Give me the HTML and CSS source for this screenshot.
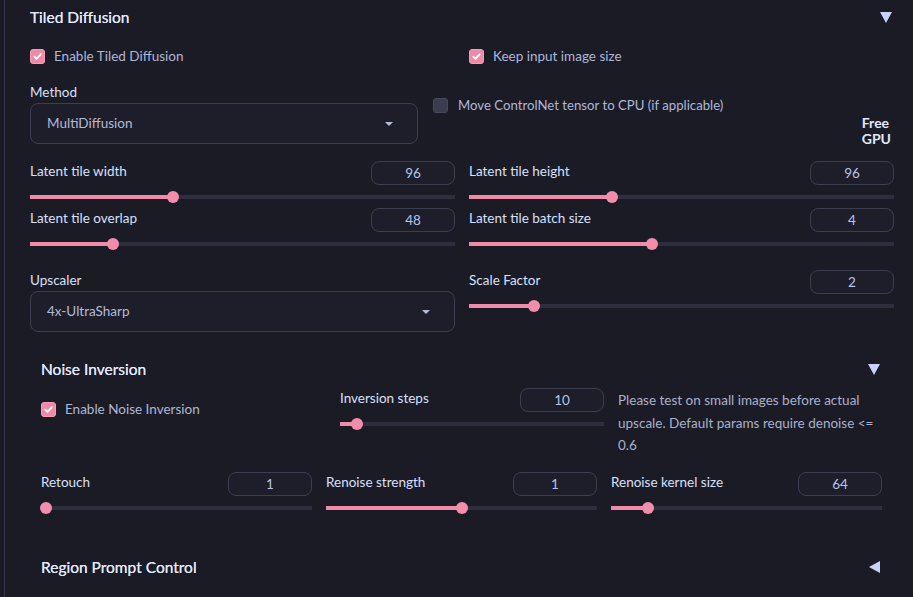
FILE: index.html
```html
<!DOCTYPE html>
<html lang="en">

<head>
  <meta charset="UTF-8">
  <meta name="viewport" content="width=device-width, initial-scale=1.0">
  <title>Tiled Diffusion</title>
  <link rel="stylesheet" href="styles.css">
</head>

<body>
  <div class="panel">
    <div class="acc_head">
      <span class="acc_title">Tiled Diffusion</span>
      <svg class="tri" width="12" height="11" viewBox="0 0 12 11"><path d="M0 0H12L6 11Z" /></svg>
    </div>

    <div class="two_col check_row">
      <label class="check"><span class="box on"><svg viewBox="0 0 14 14"><path d="M3.5 7.2l2.4 2.4 4.6-5" /></svg></span>Enable Tiled Diffusion</label>
      <label class="check"><span class="box on"><svg viewBox="0 0 14 14"><path d="M3.5 7.2l2.4 2.4 4.6-5" /></svg></span>Keep input image size</label>
    </div>

    <div class="method_row">
      <div>
        <div class="label">Method</div>
        <div class="dropdown method_dd">MultiDiffusion<span class="caret"></span></div>
      </div>
      <div class="method_right">
        <label class="check"><span class="box"></span>Move ControlNet tensor to CPU (if applicable)</label>
        <div class="free_gpu">Free<br>GPU</div>
      </div>
    </div>

    <div class="two_col slider_grid">
      <div class="slider">
        <div class="slider_head"><span class="label">Latent tile width</span><span class="num">96</span></div>
        <div class="track"><div class="fill" style="width: 33.6%"></div></div>
      </div>
      <div class="slider">
        <div class="slider_head"><span class="label">Latent tile height</span><span class="num">96</span></div>
        <div class="track"><div class="fill" style="width: 33.6%"></div></div>
      </div>
      <div class="slider">
        <div class="slider_head"><span class="label">Latent tile overlap</span><span class="num">48</span></div>
        <div class="track"><div class="fill" style="width: 19.5%"></div></div>
      </div>
      <div class="slider">
        <div class="slider_head"><span class="label">Latent tile batch size</span><span class="num">4</span></div>
        <div class="track"><div class="fill" style="width: 43.1%"></div></div>
      </div>
    </div>

    <div class="two_col upscale_row">
      <div>
        <div class="label">Upscaler</div>
        <div class="dropdown up_dd">4x-UltraSharp<span class="caret"></span></div>
      </div>
      <div class="slider">
        <div class="slider_head"><span class="label">Scale Factor</span><span class="num">2</span></div>
        <div class="track"><div class="fill" style="width: 15.3%"></div></div>
      </div>
    </div>

    <div class="sub">
      <div class="acc_head sub_head">
        <span class="acc_title">Noise Inversion</span>
        <svg class="tri" width="12" height="11" viewBox="0 0 12 11"><path d="M0 0H12L6 11Z" /></svg>
      </div>

      <div class="noise_row">
        <label class="check noise_check"><span class="box on"><svg viewBox="0 0 14 14"><path d="M3.5 7.2l2.4 2.4 4.6-5" /></svg></span>Enable Noise Inversion</label>
        <div class="slider">
          <div class="slider_head"><span class="label">Inversion steps</span><span class="num">10</span></div>
          <div class="track"><div class="fill" style="width: 6.4%"></div></div>
        </div>
        <p class="info">Please test on small images before actual upscale. Default params require denoise &lt;= 0.6</p>
      </div>

      <div class="three_col">
        <div class="slider">
          <div class="slider_head"><span class="label">Retouch</span><span class="num">1</span></div>
          <div class="track"><div class="fill" style="width: 1.8%"></div></div>
        </div>
        <div class="slider">
          <div class="slider_head"><span class="label">Renoise strength</span><span class="num">1</span></div>
          <div class="track"><div class="fill" style="width: 50.2%"></div></div>
        </div>
        <div class="slider">
          <div class="slider_head"><span class="label">Renoise kernel size</span><span class="num">64</span></div>
          <div class="track"><div class="fill" style="width: 13.7%"></div></div>
        </div>
      </div>

      <div class="acc_head sub_head region_head">
        <span class="acc_title">Region Prompt Control</span>
        <svg class="tri" width="11" height="12" viewBox="0 0 11 12"><path d="M11 0V12L0 6Z" /></svg>
      </div>
    </div>
  </div>
</body>

</html>
```

FILE: styles.css
```css
* {
  margin: 0;
  padding: 0;
  box-sizing: border-box;
}

body {
  background-color: #1b1b26;
  font-family: Lato, "Liberation Sans", sans-serif;
  font-size: 14px;
  color: #c8d1f3;
  overflow: hidden;
}

.panel {
  height: 597px;
  margin-left: 4px;
  border-left: 1px solid #34344a;
  padding: 0 19px 0 25px;
}

.acc_head {
  display: flex;
  justify-content: space-between;
  align-items: center;
  height: 34px;
}

.acc_title {
  font-size: 15.5px;
  font-weight: 400;
  color: #e2e9ff;
  text-shadow: 0 0 0.3px #e2e9ff;
}

.tri {
  fill: #c9d2fb;
  margin-right: 2px;
}

.label {
  display: block;
  line-height: 20px;
  font-size: 13.5px;
  font-weight: 400;
  color: #d8e0fd;
}

/* checkboxes */
.check {
  display: flex;
  align-items: center;
  gap: 9px;
  line-height: 20px;
  font-size: 13.5px;
  color: #aeb7d8;
}

.box {
  display: block;
  width: 15px;
  height: 15px;
  border-radius: 3px;
  background-color: #3b3c4e;
  border: 1px solid #47485c;
}

.box.on {
  background-color: #ee8aa8;
  border-color: #f3a0b8;
}

.box svg {
  display: block;
  width: 13px;
  height: 13px;
  fill: none;
  stroke: #fff;
  stroke-width: 2;
  stroke-linecap: round;
  stroke-linejoin: round;
}

.two_col {
  display: grid;
  grid-template-columns: 1fr 1fr;
  column-gap: 14px;
}

.check_row {
  margin-top: 12px;
}

/* method */
.method_row {
  display: grid;
  grid-template-columns: 388px 1fr;
  column-gap: 15px;
  margin-top: 16px;
}

.dropdown {
  position: relative;
  margin-top: 1px;
  border: 1px solid #3d3d50;
  border-radius: 8px;
  background-color: #1e1e2b;
  padding-left: 16px;
  color: #b2bad9;
  font-size: 13.5px;
}

.method_dd {
  height: 41px;
  line-height: 39px;
}

.up_dd {
  height: 41px;
  line-height: 39px;
}

.caret {
  position: absolute;
  right: 24px;
  top: 18px;
  border-left: 4px solid transparent;
  border-right: 4px solid transparent;
  border-top: 4px solid #b4bcd6;
}

.method_right {
  display: flex;
  flex-direction: column;
  padding-top: 13px;
}

.method_right .check {
  gap: 10px;
  font-size: 13.2px;
}

.free_gpu {
  align-self: flex-end;
  margin-top: 0;
  padding-right: 3px;
  font-weight: 700;
  font-size: 14px;
  line-height: 16px;
  color: #e2e8fd;
  text-align: left;
}

/* sliders */
.slider_grid {
  margin-top: 14px;
  row-gap: 9px;
}

.slider_head {
  display: flex;
  justify-content: space-between;
  align-items: flex-start;
  height: 24px;
}

.num {
  width: 84px;
  height: 24px;
  line-height: 22px;
  border: 1px solid #3d3d50;
  border-radius: 8px;
  background-color: #1e1e2b;
  text-align: center;
  font-size: 13.5px;
  color: #b9c3e8;
}

.track {
  position: relative;
  height: 4px;
  margin-top: 10px;
  background-color: #2e2e3f;
}

.fill {
  position: relative;
  height: 4px;
  background-color: #ef8aa8;
}

.fill::after {
  content: "";
  position: absolute;
  right: -6px;
  top: -4px;
  width: 12px;
  height: 12px;
  border-radius: 50%;
  background-color: #f28eab;
}

.upscale_row {
  margin-top: 24px;
}

/* noise inversion */
.sub {
  padding: 0 12px 0 11px;
}

.sub .acc_head {
  height: 30px;
}

.sub_head {
  margin-top: 22px;
}

.noise_row {
  display: grid;
  grid-template-columns: 285px 264px 1fr;
  column-gap: 14px;
  margin-top: 4px;
}

.noise_check {
  align-self: flex-start;
  margin-top: 11px;
}

.info {
  margin-top: 1px;
  line-height: 22.5px;
  font-size: 13.5px;
  color: #a9b1cc;
}

.three_col {
  display: grid;
  grid-template-columns: 1fr 1fr 1fr;
  column-gap: 14px;
  margin-top: 15px;
}

.region_head {
  margin-top: 42px;
}
```
